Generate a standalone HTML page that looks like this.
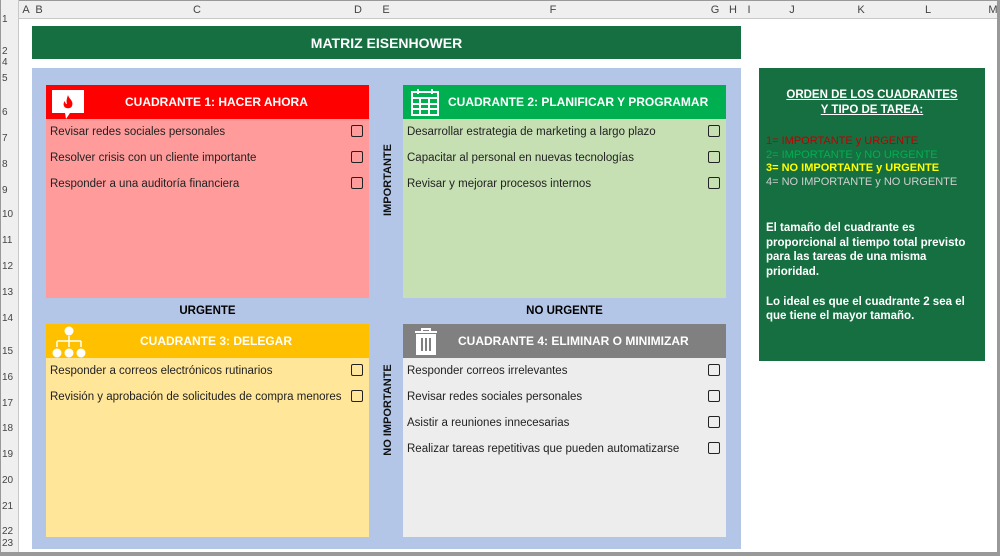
<!DOCTYPE html>
<html><head><meta charset="utf-8"><style>
*{margin:0;padding:0;box-sizing:border-box}
body{width:1000px;height:556px;background:#fff;font-family:"Liberation Sans",sans-serif;position:relative;overflow:hidden}
.a{position:absolute}
.colh{left:0;top:0;width:1000px;height:19px;background:#efefef;border-bottom:1px solid #c8c8c8;border-top:1px solid #999}
.rowh{left:0;top:0;width:19px;height:556px;background:#efefef;border-right:1px solid #c8c8c8;border-left:1px solid #999}
.cl{font-size:11px;color:#444;top:4px;transform:translateX(-50%)}
.rl{font-size:10px;color:#444;left:2px}
.hdr{color:#fff;font-weight:bold;font-size:12px;display:flex;align-items:center}
.item{font-size:11.5px;color:#222;left:4px}
.cb{width:12px;height:12px;border:1.5px solid #222;border-radius:2px}
.vt{font-weight:bold;font-size:11px;color:#111;transform:rotate(-90deg);transform-origin:center;white-space:nowrap}
</style></head><body>
<div class="a colh"></div><div class="a rowh"></div>
<div class="a cl" style="left:26px">A</div><div class="a cl" style="left:39px">B</div><div class="a cl" style="left:197px">C</div><div class="a cl" style="left:358px">D</div><div class="a cl" style="left:386px">E</div><div class="a cl" style="left:553px">F</div><div class="a cl" style="left:715px">G</div><div class="a cl" style="left:733px">H</div><div class="a cl" style="left:749px">I</div><div class="a cl" style="left:792px">J</div><div class="a cl" style="left:861px">K</div><div class="a cl" style="left:928px">L</div><div class="a cl" style="left:993px">M</div>
<div class="a rl" style="top:14px">1</div><div class="a rl" style="top:46px">2</div><div class="a rl" style="top:57px">4</div><div class="a rl" style="top:73px">5</div><div class="a rl" style="top:107px">6</div><div class="a rl" style="top:133px">7</div><div class="a rl" style="top:159px">8</div><div class="a rl" style="top:185px">9</div><div class="a rl" style="top:209px">10</div><div class="a rl" style="top:235px">11</div><div class="a rl" style="top:261px">12</div><div class="a rl" style="top:287px">13</div><div class="a rl" style="top:313px">14</div><div class="a rl" style="top:346px">15</div><div class="a rl" style="top:372px">16</div><div class="a rl" style="top:398px">17</div><div class="a rl" style="top:423px">18</div><div class="a rl" style="top:449px">19</div><div class="a rl" style="top:475px">20</div><div class="a rl" style="top:501px">21</div><div class="a rl" style="top:526px">22</div><div class="a rl" style="top:538px">23</div>

<div class="a hdr" style="left:32px;top:26px;width:709px;height:33px;background:#156F41;justify-content:center;font-size:14px">MATRIZ EISENHOWER</div>
<div class="a" style="left:32px;top:68px;width:709px;height:481px;background:#B4C6E7"></div>

<!-- Q1 -->
<div class="a hdr" style="left:46px;top:85px;width:323px;height:34px;background:#f00;padding-left:79px">CUADRANTE 1: HACER AHORA</div>
<svg class="a" style="left:50px;top:89px" width="36" height="32" viewBox="0 0 36 32"><path d="M2 1h32v23H20l-4 6-1-6H2z" fill="#fff"/><path d="M18 6c1 4 6 6 4 11-1 3-7 3-8 0-1-2 0-4 1-5 0 2 1 3 2 3-1-3 0-6 1-9z" fill="#f00"/></svg>
<div class="a" style="left:46px;top:119px;width:323px;height:179px;background:#FF9B9B">
<div class="a item" style="top:7px">Revisar redes sociales personales</div><div class="a cb" style="left:305px;top:6px"></div>
<div class="a item" style="top:33px">Resolver crisis con un cliente importante</div><div class="a cb" style="left:305px;top:32px"></div>
<div class="a item" style="top:59px">Responder a una auditoría financiera</div><div class="a cb" style="left:305px;top:58px"></div>
</div>
<!-- Q2 -->
<div class="a hdr" style="left:403px;top:85px;width:323px;height:34px;background:#00B050;padding-left:45px">CUADRANTE 2: PLANIFICAR Y PROGRAMAR</div>
<svg class="a" style="left:410px;top:87px" width="30" height="30" viewBox="0 0 30 30" fill="none" stroke="#fff" stroke-width="2"><rect x="2" y="5" width="26" height="23"/><path d="M2 11h26M2 17h26M2 22h26M10 11v17M19 11v17M8 2v5M22 2v5"/></svg>
<div class="a" style="left:403px;top:119px;width:323px;height:179px;background:#C6E0B4">
<div class="a item" style="top:7px">Desarrollar estrategia de marketing a largo plazo</div><div class="a cb" style="left:305px;top:6px"></div>
<div class="a item" style="top:33px">Capacitar al personal en nuevas tecnologías</div><div class="a cb" style="left:305px;top:32px"></div>
<div class="a item" style="top:59px">Revisar y mejorar procesos internos</div><div class="a cb" style="left:305px;top:58px"></div>
</div>
<div class="a" style="left:46px;top:305px;width:323px;text-align:center;font-weight:bold;font-size:11.5px">URGENTE</div>
<div class="a" style="left:403px;top:305px;width:323px;text-align:center;font-weight:bold;font-size:11.5px">NO URGENTE</div>
<div class="a vt" style="left:348px;top:174px;width:80px;text-align:center">IMPORTANTE</div>
<div class="a vt" style="left:338px;top:404px;width:100px;text-align:center">NO IMPORTANTE</div>
<!-- Q3 -->
<div class="a hdr" style="left:46px;top:324px;width:323px;height:34px;background:#FFC000;padding-left:94px">CUADRANTE 3: DELEGAR</div>
<svg class="a" style="left:52px;top:326px" width="34" height="32" viewBox="0 0 34 32" fill="#fff" stroke="#fff"><circle cx="17" cy="5" r="4"/><path d="M17 10v5M5 15h24M5 15v6M17 15v6M29 15v6" fill="none" stroke-width="1.5"/><circle cx="5" cy="27" r="4"/><circle cx="17" cy="27" r="4"/><circle cx="29" cy="27" r="4"/></svg>
<div class="a" style="left:46px;top:358px;width:323px;height:179px;background:#FFE699">
<div class="a item" style="top:7px">Responder a correos electrónicos rutinarios</div><div class="a cb" style="left:305px;top:6px"></div>
<div class="a item" style="top:33px">Revisión y aprobación de solicitudes de compra menores</div><div class="a cb" style="left:305px;top:32px"></div>
</div>
<!-- Q4 -->
<div class="a hdr" style="left:403px;top:324px;width:323px;height:34px;background:#808080;padding-left:55px">CUADRANTE 4: ELIMINAR O MINIMIZAR</div>
<svg class="a" style="left:414px;top:327px" width="24" height="28" viewBox="0 0 24 28" fill="none" stroke="#fff" stroke-width="2"><path d="M1 5h22M8 5V2h8v3"/><rect x="3" y="8" width="18" height="19" fill="#fff"/><path d="M8 11v13M12 11v13M16 11v13" stroke="#808080"/></svg>
<div class="a" style="left:403px;top:358px;width:323px;height:179px;background:#EDEDED">
<div class="a item" style="top:7px">Responder correos irrelevantes</div><div class="a cb" style="left:305px;top:6px"></div>
<div class="a item" style="top:33px">Revisar redes sociales personales</div><div class="a cb" style="left:305px;top:32px"></div>
<div class="a item" style="top:59px">Asistir a reuniones innecesarias</div><div class="a cb" style="left:305px;top:58px"></div>
<div class="a item" style="top:85px">Realizar tareas repetitivas que pueden automatizarse</div><div class="a cb" style="left:305px;top:84px"></div>
</div>
<!-- right panel -->
<div class="a" style="left:759px;top:68px;width:226px;height:293px;background:#156F41;font-size:11.5px;font-weight:bold;color:#fff">
<div class="a" style="left:0;top:20px;width:226px;text-align:center;text-decoration:underline;line-height:15px">ORDEN DE LOS CUADRANTES<br>Y TIPO DE TAREA:</div>
<div class="a" style="left:7px;top:67px;line-height:13.5px;font-weight:normal;font-size:11px">
<div style="color:#C00000">1= IMPORTANTE y URGENTE</div>
<div style="color:#00B050">2= IMPORTANTE y NO URGENTE</div>
<div style="color:#FFFF00;font-weight:bold">3= NO IMPORTANTE y URGENTE</div>
<div style="color:#D0D0D0">4= NO IMPORTANTE y NO URGENTE</div></div>
<div class="a" style="left:7px;top:153px;width:208px;line-height:14.7px">El tamaño del cuadrante es<br>proporcional al tiempo total previsto<br>para las tareas de una misma<br>prioridad.<br><br>Lo ideal es que el cuadrante 2 sea el<br>que tiene el mayor tamaño.</div>
</div>
<div class="a" style="left:0;top:552px;width:1000px;height:4px;background:#999"></div>
<div class="a" style="left:997px;top:0;width:3px;height:556px;background:#999"></div>
</body></html>
